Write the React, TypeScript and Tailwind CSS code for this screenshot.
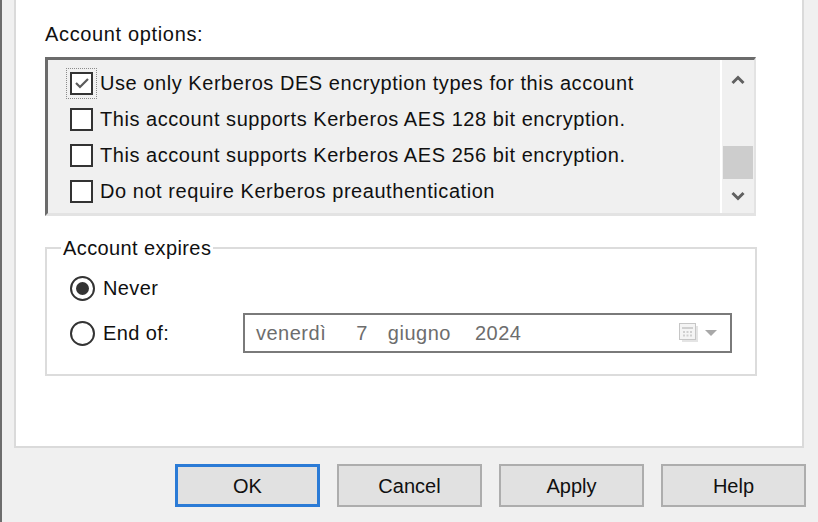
import React from 'react';

const font = { fontFamily: '"Liberation Sans", Arial, sans-serif' };

function CheckRow({ label, checked = false, focused = false }: { label: string; checked?: boolean; focused?: boolean }) {
  return (
    <div className="flex items-center h-[36px]">
      <span className={focused ? 'outline-1 outline-dotted outline-[#8a8a8a] outline-offset-[3px]' : ''}>
        <span className="w-[23px] h-[23px] border-2 border-[#333333] bg-white flex items-center justify-center">
          {checked && (
            <svg width="16" height="12" viewBox="0 0 16 12">
              <path d="M2 6 L6 10 L14 2" stroke="#5a5a5a" strokeWidth="2.2" fill="none" />
            </svg>
          )}
        </span>
      </span>
      <span className="ml-[7px] text-[20px] text-[#101010] tracking-[0.55px]">{label}</span>
    </div>
  );
}

function Radio({ label, selected = false }: { label: string; selected?: boolean }) {
  return (
    <div className="flex items-center">
      <span className="w-[25px] h-[25px] rounded-full border-2 border-[#333333] bg-white flex items-center justify-center">
        {selected && <span className="w-[13px] h-[13px] rounded-full bg-[#333333]" />}
      </span>
      <span className="ml-[8px] text-[20px] text-[#101010] tracking-[0.4px]">{label}</span>
    </div>
  );
}

function Btn({ label, primary = false }: { label: string; primary?: boolean }) {
  return (
    <button
      className={
        'w-[145px] h-[43px] bg-[#e1e1e1] text-[20px] text-[#101010] flex items-center justify-center ' +
        (primary ? 'border-[3px] border-[#2b7bd6]' : 'border-2 border-[#adadad]')
      }
    >
      {label}
    </button>
  );
}

export default function App() {
  return (
    <div style={font} className="w-[818px] h-[522px] overflow-hidden bg-[#f0f0f0] border-l-2 border-[#6d6d6d] flex flex-col">
      <div className="pl-[12px] pr-[14px]">
        <div className="h-[448px] bg-white border-l-2 border-r-2 border-b-2 border-[#dadada] pl-[29px] pr-[46px]">
          <div className="pt-[22px] text-[20px] text-[#101010] leading-[24px] tracking-[0.65px]">Account options:</div>

          <div className="mt-[11px] h-[159px] w-[711px] border-t-[3px] border-l-[3px] border-t-[#6b6b6b] border-l-[#6b6b6b] border-r-2 border-b-[3px] border-r-[#e3e3e3] border-b-[#e3e3e3] bg-[#f0f0f0] flex">
            <div className="flex-1 pl-[22px] pt-[5px]">
              <CheckRow label="Use only Kerberos DES encryption types for this account" checked focused />
              <CheckRow label="This account supports Kerberos AES 128 bit encryption." />
              <CheckRow label="This account supports Kerberos AES 256 bit encryption." />
              <CheckRow label="Do not require Kerberos preauthentication" />
            </div>
            <div className="w-[2px] bg-white" />
            <div className="w-[32px] flex flex-col items-center">
              <div className="h-[38px] flex items-center justify-center pt-[2px]">
                <svg width="14" height="10" viewBox="0 0 14 10">
                  <path d="M1.5 8 L7 2.5 L12.5 8" stroke="#606060" strokeWidth="3" fill="none" />
                </svg>
              </div>
              <div className="h-[48px]" />
              <div className="h-[33px] w-[30px] bg-[#cdcdcd]" />
              <div className="flex-1 flex items-center justify-center">
                <svg width="14" height="10" viewBox="0 0 14 10">
                  <path d="M1.5 2 L7 7.5 L12.5 2" stroke="#606060" strokeWidth="3" fill="none" />
                </svg>
              </div>
            </div>
          </div>

          <fieldset className="mt-[21px] w-[711px] h-[139px] border-2 border-[#dcdcdc] px-[23px] pt-[8px]">
            <legend className="ml-[-9px] px-[2px] text-[20px] text-[#101010] leading-[22px] tracking-[0.4px]">Account expires</legend>
            <div className="pt-[6px]">
              <Radio label="Never" selected />
            </div>
            <div className="mt-[10px] flex items-center">
              <div className="w-[173px]">
                <Radio label="End of:" />
              </div>
              <div className="w-[489px] h-[40px] border-2 border-[#7a7a7a] bg-white flex items-center pl-[11px] pr-[12px] text-[20px] text-[#6d6d6d] tracking-[0.5px]">
                <span>venerdì</span>
                <span className="ml-[30px]">7</span>
                <span className="ml-[20px]">giugno</span>
                <span className="ml-[24px]">2024</span>
                <span className="flex-1" />
                <svg width="22" height="22" viewBox="0 0 22 22">
                  <rect x="4" y="4" width="16" height="16" fill="#e4e4e4" />
                  <rect x="1.5" y="1.5" width="16" height="16" fill="#f4f4f4" stroke="#c6c6c6" />
                  <rect x="4" y="5" width="11" height="2" fill="#d0d0d0" />
                  <g fill="#cfcfcf">
                    <rect x="5" y="9" width="2" height="2" />
                    <rect x="8.5" y="9" width="2" height="2" />
                    <rect x="12" y="9" width="2" height="2" />
                    <rect x="5" y="12.5" width="2" height="2" />
                    <rect x="8.5" y="12.5" width="2" height="2" />
                    <rect x="12" y="12.5" width="2" height="2" />
                  </g>
                </svg>
                <svg className="ml-[4px]" width="14" height="8" viewBox="0 0 14 8">
                  <path d="M1 1 L13 1 L7 7 Z" fill="#a8a8a8" />
                </svg>
              </div>
            </div>
          </fieldset>
        </div>
      </div>

      <div className="flex justify-end gap-[17px] pr-[12px] pt-[16px]">
        <Btn label="OK" primary />
        <Btn label="Cancel" />
        <Btn label="Apply" />
        <Btn label="Help" />
      </div>
    </div>
  );
}
